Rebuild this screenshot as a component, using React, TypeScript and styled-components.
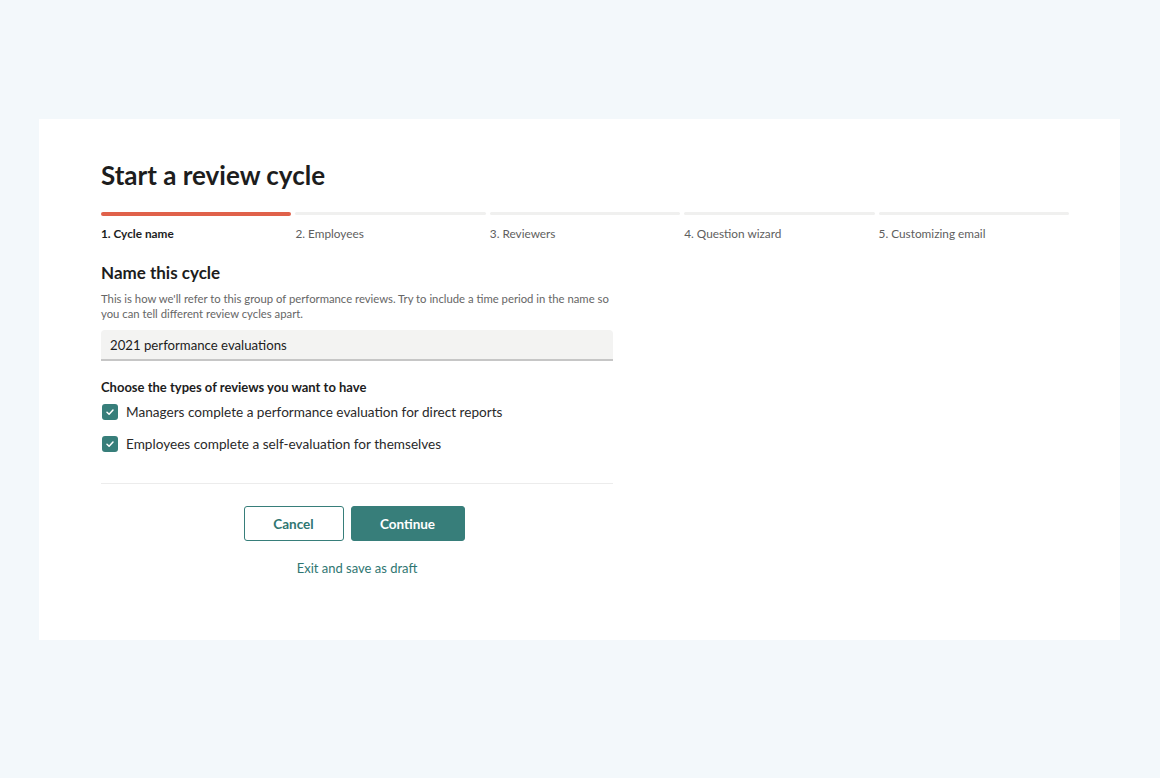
import React from "react";
import styled, { createGlobalStyle } from "styled-components";

const GlobalStyle = createGlobalStyle`
  html, body { margin: 0; padding: 0; background: #f3f8fb; }
  body { font-family: Lato, "Noto Sans", sans-serif; color: #1c1c1c; }
  * { box-sizing: border-box; }
`;

const Page = styled.div`
  width: 1160px;
  height: 778px;
  padding: 119px 40px 0 39px;
`;

const Card = styled.section`
  background: #ffffff;
  height: 521px;
  padding: 38px 51px 0 62px;
`;

const Title = styled.h1`
  margin: 0;
  font-size: 26px;
  font-weight: 700;
  line-height: 36px;
  letter-spacing: 0;
  color: #1d1d1d;
`;

const Stepper = styled.ol`
  list-style: none;
  margin: 19px 0 0;
  padding: 0;
  display: grid;
  grid-template-columns: repeat(5, 1fr);
  column-gap: 4px;
`;

const Step = styled.li<{ $active?: boolean }>`
  display: flex;
  flex-direction: column;
  gap: ${(p) => (p.$active ? "10px" : "11px")};
  font-size: 11.8px;
  line-height: 16px;
  font-weight: ${(p) => (p.$active ? 700 : 400)};
  color: ${(p) => (p.$active ? "#1d1d1d" : "#5e5e5e")};
`;

const Bar = styled.span<{ $active?: boolean }>`
  display: block;
  height: ${(p) => (p.$active ? "4px" : "3px")};
  border-radius: 2px;
  background: ${(p) => (p.$active ? "#e0614a" : "#f0f0ef")};
`;

const Form = styled.div`
  width: 512px;
  margin-top: 19px;
  display: flex;
  flex-direction: column;
`;

const SectionTitle = styled.h2`
  margin: 0;
  font-size: 17px;
  font-weight: 700;
  line-height: 24px;
  color: #1d1d1d;
`;

const Help = styled.p`
  margin: 6px 0 0;
  font-size: 11.3px;
  line-height: 15px;
  color: #666666;
`;

const Input = styled.input`
  margin-top: 9px;
  height: 31px;
  width: 100%;
  border: none;
  border-bottom: 2px solid #c6c6c6;
  border-radius: 4px 4px 0 0;
  background: #f3f3f2;
  padding: 0 9px;
  font: inherit;
  font-size: 13.2px;
  color: #1d1d1d;
  outline: none;
`;

const Legend = styled.h3`
  margin: 17px 0 0;
  font-size: 13px;
  font-weight: 700;
  line-height: 18px;
  color: #1d1d1d;
`;

const CheckList = styled.div`
  margin-top: 7px;
  display: flex;
  flex-direction: column;
  gap: 14px;
`;

const CheckRow = styled.label`
  display: flex;
  align-items: center;
  gap: 8px;
  font-size: 13.6px;
  line-height: 18px;
  color: #2a2a2a;
  padding-left: 1px;
`;

const Box = styled.span`
  width: 16px;
  height: 16px;
  border-radius: 3px;
  background: #377e7a;
  display: inline-flex;
  align-items: center;
  justify-content: center;
  flex: none;
`;

const Divider = styled.hr`
  margin: 30px 0 0;
  border: none;
  border-top: 1px solid #ececec;
  width: 100%;
`;

const Actions = styled.div`
  margin-top: 22px;
  display: flex;
  justify-content: center;
  gap: 7px;
  padding-right: 6px;
`;

const Button = styled.button<{ $primary?: boolean }>`
  height: 35px;
  width: ${(p) => (p.$primary ? "114px" : "100px")};
  border-radius: 3px;
  border: 1px solid #377e7a;
  background: ${(p) => (p.$primary ? "#377e7a" : "#ffffff")};
  color: ${(p) => (p.$primary ? "#ffffff" : "#2f7672")};
  font: inherit;
  font-size: 13.5px;
  font-weight: 700;
  cursor: pointer;
`;

const DraftLink = styled.a`
  margin-top: 18px;
  align-self: center;
  font-size: 13px;
  line-height: 18px;
  color: #2f7672;
  text-decoration: none;
`;

const Check = () => (
  <svg width="10" height="10" viewBox="0 0 10 10" fill="none">
    <path d="M2 5.2 L4.1 7.2 L8 3" stroke="#fff" strokeWidth="1.5" strokeLinecap="round" strokeLinejoin="round" />
  </svg>
);

const steps = ["1. Cycle name", "2. Employees", "3. Reviewers", "4. Question wizard", "5. Customizing email"];

export default function App() {
  return (
    <>
      <GlobalStyle />
      <Page>
        <Card>
          <Title>Start a review cycle</Title>
          <Stepper>
            {steps.map((s, i) => (
              <Step key={s} $active={i === 0}>
                <Bar $active={i === 0} />
                {s}
              </Step>
            ))}
          </Stepper>
          <Form>
            <SectionTitle>Name this cycle</SectionTitle>
            <Help>
              This is how we'll refer to this group of performance reviews. Try to include a time period in the name so you can tell different review cycles apart.
            </Help>
            <Input defaultValue="2021 performance evaluations" />
            <Legend>Choose the types of reviews you want to have</Legend>
            <CheckList>
              <CheckRow>
                <Box><Check /></Box>
                Managers complete a performance evaluation for direct reports
              </CheckRow>
              <CheckRow>
                <Box><Check /></Box>
                Employees complete a self-evaluation for themselves
              </CheckRow>
            </CheckList>
            <Divider />
            <Actions>
              <Button>Cancel</Button>
              <Button $primary>Continue</Button>
            </Actions>
            <DraftLink href="#">Exit and save as draft</DraftLink>
          </Form>
        </Card>
      </Page>
    </>
  );
}
